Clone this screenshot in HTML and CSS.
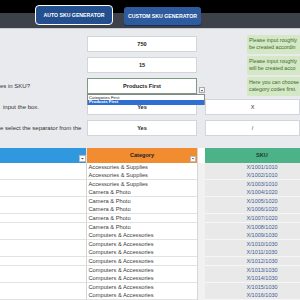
FILE: index.html
```html
<!DOCTYPE html>
<html>
<head>
<meta charset="utf-8">
<link rel="stylesheet" href="styles.css">
</head>
<body>
<div class="top">
  <div class="btn btn-active">AUTO SKU GENERATOR</div>
  <div class="btn btn-custom">CUSTOM SKU GENERATOR</div>
</div>
<div class="form">
  <div class="label"></div>
  <div class="box">750</div>
  <div class="note">Please input roughly<br>be created accordin</div>

  <div class="label"></div>
  <div class="box">15</div>
  <div class="note">Please input roughly<br>will be created acco</div>

  <div class="label">es in SKU?</div>
  <div class="box dropdown">Products First
    <div class="dd-arrow"><svg width="5" height="5" viewBox="0 0 5 5"><path d="M1 2 L4 2 L2.5 3.6 Z" fill="#444"/></svg></div>
    <div class="dd-list">
      <div class="dd-item">Categories First</div>
      <div class="dd-item dd-sel">Products First</div>
    </div>
  </div>
  <div class="note">Here you can choose<br>category codes first.</div>

  <div class="label label-in">input the box.</div>
  <div class="box">Yes</div>
  <div class="box wide plain">X</div>

  <div class="label">e select the separator from the</div>
  <div class="box">Yes</div>
  <div class="box wide plain">/</div>
</div>
<div class="table">
  <div class="trow thead">
    <div class="th th-blue"><span class="filter"><svg width="5" height="5" viewBox="0 0 5 5"><path d="M1 2 L4 2 L2.5 3.6 Z" fill="#555"/></svg></span></div>
    <div class="th th-orange">Category<span class="filter"><svg width="5" height="5" viewBox="0 0 5 5"><path d="M1 2 L4 2 L2.5 3.6 Z" fill="#555"/></svg></span></div>
    <div class="gap"></div>
    <div class="th th-green">SKU</div>
  </div>
  <div class="trow"><div class="c0"></div><div class="cat">Accessories &amp; Supplies</div><div class="gap"></div><div class="sku">X/1001/1010</div></div>
  <div class="trow"><div class="c0"></div><div class="cat">Accessories &amp; Supplies</div><div class="gap"></div><div class="sku">X/1002/1010</div></div>
  <div class="trow"><div class="c0"></div><div class="cat">Accessories &amp; Supplies</div><div class="gap"></div><div class="sku">X/1003/1010</div></div>
  <div class="trow"><div class="c0"></div><div class="cat">Camera &amp; Photo</div><div class="gap"></div><div class="sku">X/1004/1020</div></div>
  <div class="trow"><div class="c0"></div><div class="cat">Camera &amp; Photo</div><div class="gap"></div><div class="sku">X/1005/1020</div></div>
  <div class="trow"><div class="c0"></div><div class="cat">Camera &amp; Photo</div><div class="gap"></div><div class="sku">X/1006/1020</div></div>
  <div class="trow"><div class="c0"></div><div class="cat">Camera &amp; Photo</div><div class="gap"></div><div class="sku">X/1007/1020</div></div>
  <div class="trow"><div class="c0"></div><div class="cat">Camera &amp; Photo</div><div class="gap"></div><div class="sku">X/1008/1020</div></div>
  <div class="trow"><div class="c0"></div><div class="cat">Computers &amp; Accessories</div><div class="gap"></div><div class="sku">X/1009/1030</div></div>
  <div class="trow"><div class="c0"></div><div class="cat">Computers &amp; Accessories</div><div class="gap"></div><div class="sku">X/1010/1030</div></div>
  <div class="trow"><div class="c0"></div><div class="cat">Computers &amp; Accessories</div><div class="gap"></div><div class="sku">X/1011/1030</div></div>
  <div class="trow"><div class="c0"></div><div class="cat">Computers &amp; Accessories</div><div class="gap"></div><div class="sku">X/1012/1030</div></div>
  <div class="trow"><div class="c0"></div><div class="cat">Computers &amp; Accessories</div><div class="gap"></div><div class="sku">X/1013/1030</div></div>
  <div class="trow"><div class="c0"></div><div class="cat">Computers &amp; Accessories</div><div class="gap"></div><div class="sku">X/1014/1030</div></div>
  <div class="trow"><div class="c0"></div><div class="cat">Computers &amp; Accessories</div><div class="gap"></div><div class="sku">X/1015/1030</div></div>
  <div class="trow"><div class="c0"></div><div class="cat">Computers &amp; Accessories</div><div class="gap"></div><div class="sku">X/1016/1030</div></div>
</div>
</body>
</html>
```
FILE: styles.css
```css
html, body {
  margin: 0;
  padding: 0;
}
body {
  width: 300px;
  height: 300px;
  overflow: hidden;
  font-family: "Liberation Sans", Arial, sans-serif;
  background: #e8eaee;
}
.top {
  box-sizing: border-box;
  height: 28.5px;
  display: flex;
  align-items: flex-start;
  gap: 11px;
  padding: 5px 0 0 35px;
  background: linear-gradient(#000 0, #000 13px, #3d4149 13px, #3d4149 100%);
  border-bottom: 1.5px solid #c8ccd3;
}
.btn {
  box-sizing: border-box;
  display: flex;
  align-items: center;
  justify-content: center;
  color: #fff;
  font-weight: bold;
  font-size: 5.2px;
  white-space: nowrap;
}
.btn-active {
  width: 78px;
  height: 20px;
  border: 1.5px solid #fff;
  border-radius: 4px;
  background: #234f8f;
}
.btn-custom {
  width: 77px;
  height: 18px;
  margin-top: 2px;
  border-radius: 3px;
  background: #2e5b9e;
  box-shadow: 0 1px 0 #16305a;
}
.form {
  box-sizing: border-box;
  height: 119.5px;
  padding-top: 7.5px;
  display: grid;
  grid-template-columns: 87px 110px 8px 95px;
  grid-auto-rows: 16px;
  row-gap: 5px;
}
.label {
  grid-column: 1;
  align-self: center;
  font-size: 6px;
  color: #333;
  white-space: nowrap;
  overflow: hidden;
}
.label-in {
  padding-left: 3px;
}
.box {
  grid-column: 2;
  box-sizing: border-box;
  background: #fff;
  border: 1px solid #d2d5da;
  text-align: center;
  line-height: 14px;
  font-size: 5.6px;
  font-weight: bold;
  color: #222;
}
.box.wide {
  grid-column: 4;
}
.box.plain {
  font-weight: normal;
  color: #333;
}
.dropdown {
  position: relative;
  border: 1px solid #7f9a84;
}
.dd-arrow {
  position: absolute;
  left: 111px;
  top: 8px;
  width: 6px;
  height: 6px;
  box-sizing: border-box;
  background: #f4f4f4;
  border: 0.5px solid #aaa;
  display: flex;
  align-items: center;
  justify-content: center;
}
.dd-list {
  position: absolute;
  left: -1px;
  top: 15px;
  width: 118px;
  height: 11px;
  box-sizing: border-box;
  background: #fff;
  border: 0.6px solid #888;
  z-index: 5;
  text-align: left;
  padding-top: 0.5px;
}
.dd-item {
  height: 4.6px;
  line-height: 4.6px;
  font-size: 4.3px;
  font-weight: normal;
  color: #222;
  padding-left: 1px;
}
.dd-sel {
  background: #2f6fd1;
  color: #fff;
  font-weight: bold;
}
.note {
  grid-column: 4;
  margin: -1.5px 0 -1.5px 42px;
  background: #d4e8c6;
  border-radius: 2px 0 0 2px;
  color: #3c6a2d;
  font-size: 5.3px;
  line-height: 7px;
  padding: 2.5px 0 0 2px;
  white-space: nowrap;
  overflow: hidden;
}
.table {
  display: flex;
  flex-direction: column;
  background: #fff;
}
.trow {
  display: grid;
  grid-template-columns: 87px 110px 8px 114px;
  height: 8.6px;
  flex: none;
}
.trow.thead {
  height: 14.5px;
}
.th {
  position: relative;
  display: flex;
  align-items: center;
  justify-content: center;
  font-size: 5.6px;
  font-weight: bold;
  color: #222;
}
.th-blue {
  background: #2f98de;
  border-right: 1px solid #e0e0e0;
}
.th-orange {
  background: #f28c30;
}
.th-green {
  background: #4cb287;
  color: #1e3a2e;
}
.filter {
  position: absolute;
  right: 0;
  bottom: 1px;
  width: 7px;
  height: 7px;
  box-sizing: border-box;
  background: #fff;
  border: 0.5px solid #bbb;
  display: flex;
  align-items: center;
  justify-content: center;
}
.th-orange .filter {
  right: 1px;
  width: 6px;
  height: 6px;
}
.gap {
  background: #f1f1f1;
  border-left: 1px solid #d6d6d6;
}
.thead .gap {
  background: #fff;
}
.c0 {
  background: #fff;
  border-bottom: 1px solid #e2e2e2;
  border-right: 1px solid #d4d4d4;
  box-sizing: border-box;
}
.cat {
  box-sizing: border-box;
  background: #fff;
  border-bottom: 1px solid #e2e2e2;
  padding-left: 1.5px;
  font-size: 5.7px;
  line-height: 8px;
  color: #3a3a3a;
  white-space: nowrap;
  overflow: hidden;
}
.sku {
  box-sizing: border-box;
  background: #e9e9e9;
  border-bottom: 1px solid #f6f6f6;
  text-align: center;
  font-size: 5.5px;
  line-height: 8px;
  color: #3f5d95;
}
```
